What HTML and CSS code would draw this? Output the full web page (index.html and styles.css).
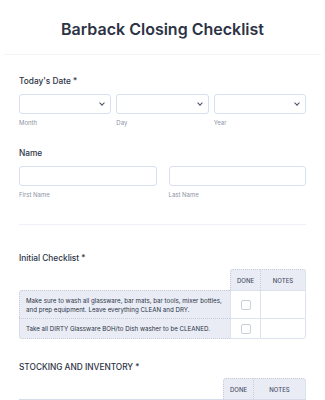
FILE: index.html
```html
<!DOCTYPE html>
<html lang="en">
<head>
    <meta charset="UTF-8">
    <meta name="viewport" content="width=device-width, initial-scale=1.0">
    <title>Barback Closing Checklist</title>
    <link rel="stylesheet" href="styles.css">
</head>
<body>
    <div class="header">
        <h1>Barback Closing Checklist</h1>
    </div>

    <div class="form">
        <div class="field">
            <div class="label">Today's Date <span class="req">*</span></div>
            <div class="date-grid">
                <div class="col">
                    <div class="select"><span class="chev"></span></div>
                    <div class="sublabel">Month</div>
                </div>
                <div class="col">
                    <div class="select"><span class="chev"></span></div>
                    <div class="sublabel">Day</div>
                </div>
                <div class="col">
                    <div class="select"><span class="chev"></span></div>
                    <div class="sublabel">Year</div>
                </div>
            </div>
        </div>

        <div class="field">
            <div class="label">Name</div>
            <div class="name-grid">
                <div class="col">
                    <div class="input"></div>
                    <div class="sublabel">First Name</div>
                </div>
                <div class="col">
                    <div class="input"></div>
                    <div class="sublabel">Last Name</div>
                </div>
            </div>
        </div>

        <div class="divider"></div>

        <div class="field checklist">
            <div class="label">Initial Checklist <span class="req">*</span></div>
            <table class="matrix">
                <tr class="head">
                    <th class="blank"></th>
                    <th class="done">DONE</th>
                    <th class="notes">NOTES</th>
                </tr>
                <tr class="first">
                    <td class="row-label">Make sure to wash all glassware, bar mats, bar tools, mixer bottles, and prep equipment. Leave everything CLEAN and DRY.</td>
                    <td class="cell"><span class="box"></span></td>
                    <td class="cell"></td>
                </tr>
                <tr class="last">
                    <td class="row-label">Take all DIRTY Glassware BOH/to Dish washer to be CLEANED.</td>
                    <td class="cell"><span class="box"></span></td>
                    <td class="cell"></td>
                </tr>
            </table>
        </div>

        <div class="field stocking">
            <div class="label">STOCKING AND INVENTORY <span class="req">*</span></div>
            <table class="matrix wide">
                <tr class="head">
                    <th class="blank"></th>
                    <th class="done">DONE</th>
                    <th class="notes">NOTES</th>
                </tr>
                <tr class="edge">
                    <td></td>
                    <td></td>
                    <td></td>
                </tr>
            </table>
        </div>
    </div>
</body>
</html>
```

FILE: styles.css
```css
* {
    margin: 0;
    padding: 0;
    box-sizing: border-box;
    font-family: Inter, "Noto Sans", sans-serif;
}

body {
    background: white;
    color: #2c3345;
    overflow: hidden;
}

.header {
    margin: 0 4px;
    padding: 17px 0 13px;
    border-bottom: 1px solid #f3f4f8;
    text-align: center;
}

.header h1 {
    font-size: 16px;
    line-height: 24px;
    font-weight: 600;
    color: #2c3345;
}

.form {
    padding: 0 19px;
}

.field {
    padding-top: 20px;
}

.label {
    font-size: 8.3px;
    line-height: 12px;
    font-weight: 500;
    margin-bottom: 7px;
}

.checklist .label,
.stocking .label {
    margin-bottom: 5px;
}

.req {
    font-weight: 400;
}

.date-grid {
    display: grid;
    grid-template-columns: repeat(3, 1fr);
    gap: 5px;
}

.name-grid {
    display: grid;
    grid-template-columns: 1fr 1fr;
    gap: 12px;
}

.select,
.input {
    position: relative;
    height: 20px;
    border: 1px solid #d8dff0;
    border-radius: 3px;
    background: white;
}

.chev {
    position: absolute;
    right: 6px;
    top: 6px;
    width: 4px;
    height: 4px;
    border-right: 1px solid #4a5068;
    border-bottom: 1px solid #4a5068;
    transform: rotate(45deg);
}

.sublabel {
    font-size: 6px;
    line-height: 9px;
    color: #8d93a5;
    margin-top: 4px;
}

.divider {
    height: 1px;
    background: #eef1f8;
    margin-top: 25px;
}

.checklist {
    padding-top: 27px;
}

.matrix {
    width: 100%;
    border-collapse: separate;
    border-spacing: 0;
    font-size: 6.2px;
}

.matrix th {
    height: 21px;
    font-weight: 500;
    font-size: 6px;
    color: #4a5068;
    background: #e9ecf5;
    border-top: 1px dotted #c6ccdb;
    border-left: 1px dotted #c6ccdb;
}

.matrix th.blank {
    background: white;
    border: none;
}

.matrix th.done {
    width: 30px;
    border-top-left-radius: 3px;
}

.matrix th.notes {
    width: 46px;
    border-right: 1px solid #dde2ef;
    border-top-right-radius: 3px;
}

.matrix.wide th.done {
    width: 30px;
}

.matrix.wide th.notes {
    width: 53px;
}

.row-label {
    background: #e9ecf5;
    padding: 0 6px;
    line-height: 9px;
    color: #2c3345;
    border-top: 1px dotted #c6ccdb;
    border-left: 1px dotted #c6ccdb;
}

.matrix tr.first .row-label {
    border-top-left-radius: 3px;
    height: 28px;
}

.matrix tr.last .row-label {
    height: 21px;
    border-bottom: 1px dotted #c6ccdb;
    border-bottom-left-radius: 3px;
}

.cell {
    background: white;
    text-align: center;
    border-top: 1px solid #dde2ef;
    border-left: 1px solid #dde2ef;
}

.cell:last-child {
    border-right: 1px solid #dde2ef;
}

.matrix tr.last .cell {
    border-bottom: 1px solid #dde2ef;
}

.matrix tr.last .cell:last-child {
    border-bottom-right-radius: 3px;
}

.box {
    display: inline-block;
    width: 10px;
    height: 10px;
    border: 1px solid #c9cfdc;
    border-radius: 2px;
    vertical-align: middle;
}

.stocking {
    padding-top: 22px;
}

.matrix tr.edge td {
    height: 20px;
    border-top: 1px solid #d6dcea;
}
```
